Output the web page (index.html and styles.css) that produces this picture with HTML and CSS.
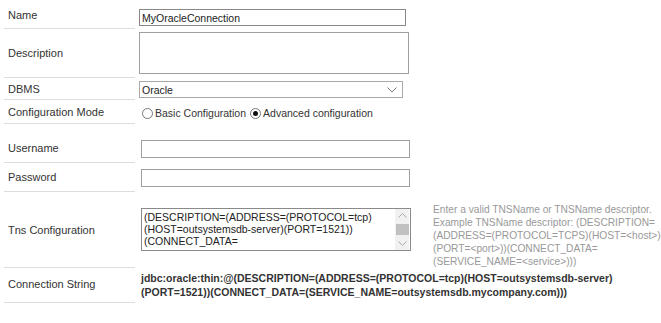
FILE: index.html
```html
<!DOCTYPE html>
<html lang="en">
  <head>
    <meta charset="UTF-8" />
    <title>Database Connection</title>
    <link rel="stylesheet" href="styles.css">
  </head>
  <body>
    <div class="form">
      <div class="linha linha-nome">
        <div class="rotulo">Name</div>
        <div class="valor">
          <input class="campo campo-nome" type="text" value="MyOracleConnection" />
        </div>
      </div>

      <div class="linha linha-desc">
        <div class="rotulo">Description</div>
        <div class="valor">
          <div class="area area-desc"></div>
        </div>
      </div>

      <div class="linha linha-dbms">
        <div class="rotulo">DBMS</div>
        <div class="valor">
          <div class="seletor">
            <span>Oracle</span>
            <svg width="10" height="6" viewBox="0 0 10 6">
              <path d="M0.5 0.5 L5 5 L9.5 0.5" fill="none" stroke="#777" stroke-width="1" />
            </svg>
          </div>
        </div>
      </div>

      <div class="linha linha-modo">
        <div class="rotulo">Configuration Mode</div>
        <div class="valor opcoes">
          <label class="opcao"><span class="radio"></span>Basic Configuration</label>
          <label class="opcao"><span class="radio marcado"></span>Advanced configuration</label>
        </div>
      </div>

      <div class="linha linha-user">
        <div class="rotulo">Username</div>
        <div class="valor">
          <input class="campo campo-longo" type="text" />
        </div>
      </div>

      <div class="linha linha-pass">
        <div class="rotulo">Password</div>
        <div class="valor">
          <input class="campo campo-longo" type="password" />
        </div>
      </div>

      <div class="linha linha-tns">
        <div class="rotulo">Tns Configuration</div>
        <div class="valor tns">
          <div class="area area-tns">
            <div class="texto-tns">
              <div>(DESCRIPTION=(ADDRESS=(PROTOCOL=tcp)</div>
              <div>(HOST=outsystemsdb-server)(PORT=1521))</div>
              <div>(CONNECT_DATA=</div>
            </div>
            <div class="rolagem">
              <svg width="9" height="5" viewBox="0 0 9 5">
                <path d="M0.5 4.5 L4.5 0.5 L8.5 4.5" fill="none" stroke="#aaa" stroke-width="1" />
              </svg>
              <div class="polegar"></div>
              <svg width="9" height="5" viewBox="0 0 9 5">
                <path d="M0.5 0.5 L4.5 4.5 L8.5 0.5" fill="none" stroke="#aaa" stroke-width="1" />
              </svg>
            </div>
          </div>
          <div class="ajuda">
            Enter a valid TNSName or TNSName descriptor.<br />
            Example TNSName descriptor: (DESCRIPTION=<br />
            (ADDRESS=(PROTOCOL=TCPS)(HOST=&lt;host&gt;)<br />
            (PORT=&lt;port&gt;))(CONNECT_DATA=<br />
            (SERVICE_NAME=&lt;service&gt;)))
          </div>
        </div>
      </div>

      <div class="linha linha-conn">
        <div class="rotulo">Connection String</div>
        <div class="valor">
          <div class="conexao">
            jdbc:oracle:thin:@(DESCRIPTION=(ADDRESS=(PROTOCOL=tcp)(HOST=outsystemsdb-server)<br />
            (PORT=1521))(CONNECT_DATA=(SERVICE_NAME=outsystemsdb.mycompany.com)))
          </div>
        </div>
      </div>
    </div>
  </body>
</html>
```

FILE: styles.css
```css
* {
  margin: 0;
  padding: 0;
  box-sizing: border-box;
}

body {
  background-color: white;
  font-family: "Liberation Sans", Arial, sans-serif;
  font-size: 11px;
  color: #333;
}

.form {
  padding-left: 4px;
}

.linha {
  display: grid;
  grid-template-columns: 131px 1fr;
  column-gap: 4px;
}

.rotulo {
  display: flex;
  align-items: center;
  padding-left: 4px;
  border-bottom: 1px solid #ddd;
}

.valor {
  display: flex;
  align-items: flex-start;
  font-size: 10.5px;
}

/* alturas das linhas */
.linha-nome { height: 29px; }
.linha-desc { height: 49px; }
.linha-dbms { height: 22px; }
.linha-modo { height: 24px; }
.linha-user { height: 39px; }
.linha-pass { height: 29px; }
.linha-tns { height: 74px; }
.linha-conn { height: 37px; }

.linha-nome .rotulo { padding-top: 2px; }
.linha-user .rotulo { padding-top: 10px; }

.linha-nome .valor { padding-top: 9px; }
.linha-desc .valor { padding-top: 3px; }
.linha-dbms .valor { padding-top: 3px; }
.linha-user .valor { padding-top: 16px; padding-left: 2px; }
.linha-pass .valor { padding-top: 6px; padding-left: 2px; }
.linha-tns .valor { padding-top: 16px; padding-left: 2px; }
.linha-conn .valor { align-items: center; padding-left: 2px; padding-top: 1px; }

.campo {
  font-family: inherit;
  font-size: 10.5px;
  color: #222;
  border: 1px solid #999;
  background: white;
  padding: 0 2px;
  outline: none;
}

.campo-nome {
  width: 267px;
  height: 17px;
  border-color: #888;
}

.campo-longo {
  width: 269px;
  height: 18px;
  border-color: #a0a0a0;
}

.area {
  border: 1px solid #999;
  background: white;
}

.area-desc {
  width: 270px;
  height: 42px;
  border-color: #a0a0a0;
}

.seletor {
  width: 264px;
  height: 17px;
  border: 1px solid #a9a9a9;
  display: flex;
  align-items: center;
  justify-content: space-between;
  padding: 0 5px 0 2px;
  color: #222;
}

.opcoes {
  align-items: center;
  padding-left: 3px;
  padding-top: 2px;
  gap: 4px;
}

.opcao {
  display: flex;
  align-items: center;
  gap: 2px;
  color: #333;
}

.radio {
  width: 11px;
  height: 11px;
  border: 1px solid #777;
  border-radius: 50%;
  display: flex;
  align-items: center;
  justify-content: center;
  background: white;
}

.radio.marcado::after {
  content: "";
  width: 5px;
  height: 5px;
  border-radius: 50%;
  background: #111;
}

.tns {
  gap: 22px;
  align-items: flex-start;
}

.area-tns {
  width: 270px;
  height: 43px;
  display: flex;
  border-color: #8a8a8a;
}

.texto-tns {
  flex: 1;
  padding: 2px 2px 0;
  line-height: 12px;
  color: #222;
}

.rolagem {
  width: 14px;
  background: #f1f1f1;
  display: flex;
  flex-direction: column;
  align-items: center;
  justify-content: space-between;
  padding: 4px 0 4px;
  margin: 0 1px 0 0;
}

.polegar {
  width: 13px;
  height: 11px;
  background: #c1c1c1;
}

.ajuda {
  font-size: 10.2px;
  line-height: 13px;
  color: #999;
  margin-top: -5px;
}

.conexao {
  font-weight: bold;
  font-size: 10.5px;
  line-height: 14px;
  color: #333;
}
```
